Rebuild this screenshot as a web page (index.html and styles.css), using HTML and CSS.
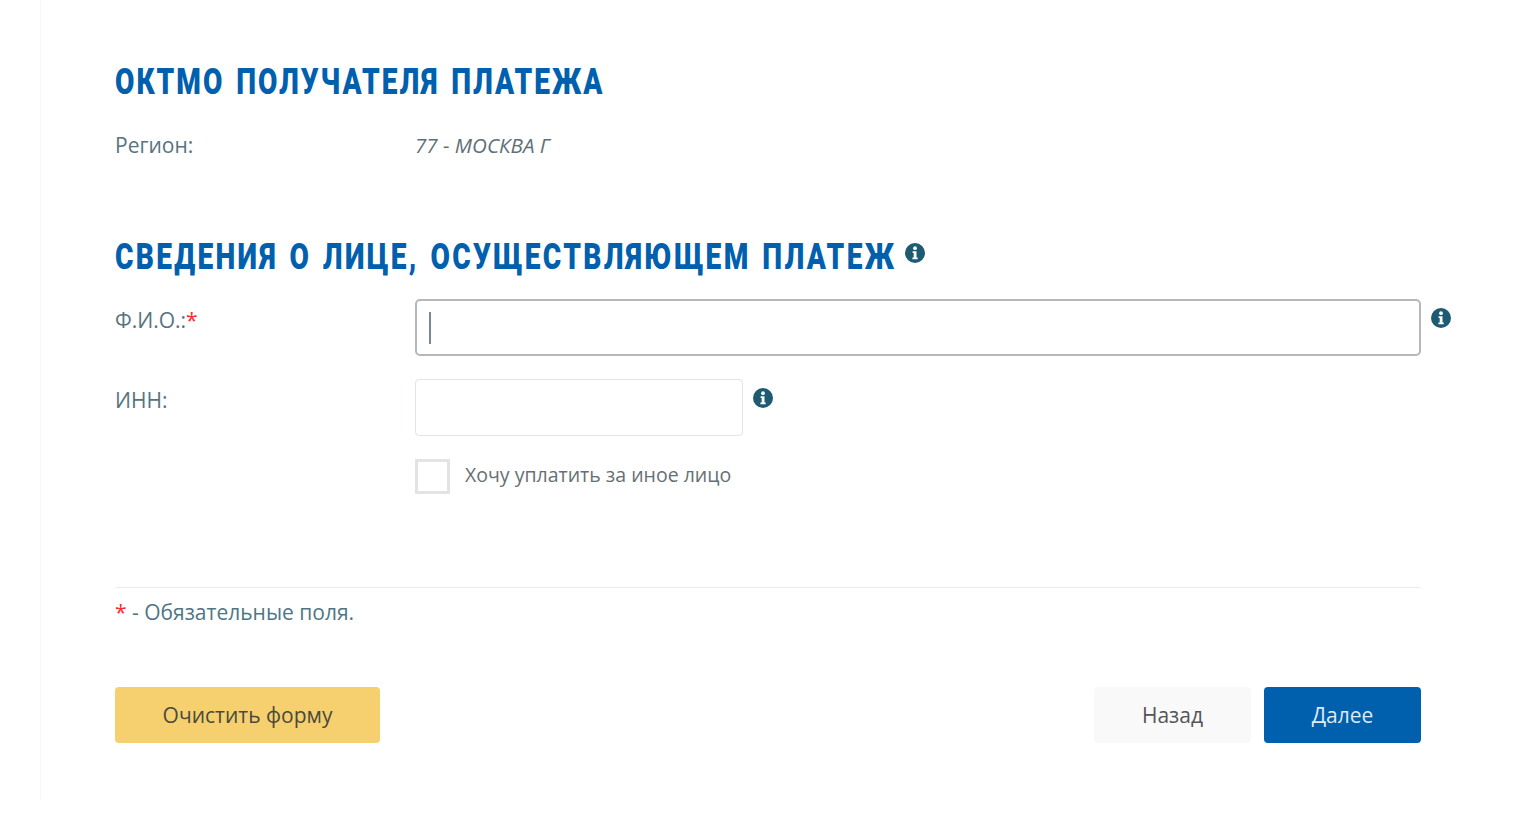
FILE: index.html
```html
<!DOCTYPE html>
<html lang="ru">
<head>
    <meta charset="UTF-8">
    <title>Сведения о плательщике</title>
    <link rel="stylesheet" href="styles.css">
</head>
<body>
    <div class="page">
        <form class="payment-form">
            <h2 class="section-title"><span class="title-text">ОКТМО получателя платежа</span></h2>
            <div class="region-row">
                <div class="label">Регион:</div>
                <div class="region-value">77 - МОСКВА Г</div>
            </div>

            <h2 class="section-title payer-title">
                <span class="title-text">Сведения о лице, осуществляющем платеж</span>
                <svg class="info info-title" viewBox="0 0 20 20"><circle cx="10" cy="10" r="10"/><circle class="info-mark" cx="10" cy="5.2" r="1.9"/><path class="info-mark" d="M7.6 8.2h3.9v6.2h1.2v1.9H7.4v-1.9h1.3v-4.3H7.6z"/></svg>
            </h2>

            <div class="field-row">
                <label class="label" for="fio">Ф.И.О.:<span class="req">*</span></label>
                <div class="text-input focused" id="fio"><span class="caret"></span></div>
                <svg class="info" viewBox="0 0 20 20"><circle cx="10" cy="10" r="10"/><circle class="info-mark" cx="10" cy="5.2" r="1.9"/><path class="info-mark" d="M7.6 8.2h3.9v6.2h1.2v1.9H7.4v-1.9h1.3v-4.3H7.6z"/></svg>
            </div>

            <div class="field-row inn-row">
                <label class="label" for="inn">ИНН:</label>
                <div class="text-input short" id="inn"></div>
                <svg class="info" viewBox="0 0 20 20"><circle cx="10" cy="10" r="10"/><circle class="info-mark" cx="10" cy="5.2" r="1.9"/><path class="info-mark" d="M7.6 8.2h3.9v6.2h1.2v1.9H7.4v-1.9h1.3v-4.3H7.6z"/></svg>
            </div>

            <div class="check-row">
                <span class="checkbox"></span>
                <span class="check-text">Хочу уплатить за иное лицо</span>
            </div>

            <div class="required-note"><span class="req">*</span> - Обязательные поля.</div>

            <div class="buttons">
                <button type="button" class="btn btn-clear">Очистить форму</button>
                <div class="buttons-right">
                    <button type="button" class="btn btn-back">Назад</button>
                    <button type="button" class="btn btn-next">Далее</button>
                </div>
            </div>
        </form>
    </div>
</body>
</html>
```

FILE: styles.css
```css
body {
    margin: 0;
    background-color: #fff;
    font-family: "Open Sans", "Noto Sans", sans-serif;
    font-size: 21px;
    color: #567480;
}

.page {
    height: 800px;
    margin-left: 40px;
    border-left: 1px solid #f7f7f7;
    box-sizing: border-box;
    padding: 63px 0 0 74px;
}

.payment-form {
    width: 1306px;
}

.section-title {
    margin: 0;
    font-family: "Roboto", sans-serif;
    font-size: 36px;
    line-height: 38px;
    font-weight: 900;
    letter-spacing: 2.6px;
    word-spacing: 3.5px;
    text-transform: uppercase;
    white-space: nowrap;
    color: #0060ae;
}

/* шрифта DIN нет, поэтому сжимаем Roboto */
.title-text {
    display: inline-block;
    transform: scaleX(0.78);
    transform-origin: left center;
}

.payer-title {
    position: relative;
    margin-top: 79px;
    letter-spacing: 3px;
    word-spacing: 3px;
}

.region-row {
    display: flex;
    margin-top: 31px;
    line-height: 27px;
}

.label {
    width: 300px;
    flex-shrink: 0;
}

.region-value {
    font-size: 20.6px;
    font-style: italic;
    color: #5f6f77;
}

.req {
    color: #ff2a2a;
}

.field-row {
    display: flex;
    margin-top: 23px;
    line-height: 42px;
}

.inn-row {
    margin-top: 23px;
}

.text-input {
    box-sizing: border-box;
    flex: 1;
    height: 57px;
    display: flex;
    align-items: center;
    padding-left: 12px;
    background: #fff;
    border: 1px solid #dfe5e8;
    border-radius: 4px;
}

.text-input.focused {
    border: 2px solid #b4b8ba;
    border-radius: 5px;
}

.text-input.short {
    flex: none;
    width: 328px;
}

.caret {
    width: 2px;
    height: 32px;
    background-color: #7a8a92;
}

.info {
    width: 20px;
    height: 20px;
    margin: 9px -30px 0 10px;
    flex-shrink: 0;
    fill: #1f5a73;
}

.info-mark {
    fill: #fff;
}

.info-title {
    position: absolute;
    top: 5px;
    left: 790px;
    margin: 0;
}

.check-row {
    display: flex;
    align-items: center;
    gap: 15px;
    margin: 23px 0 0 300px;
}

.checkbox {
    box-sizing: border-box;
    width: 35px;
    height: 35px;
    border: 3px solid #e3e3e3;
}

.check-text {
    margin-bottom: 4px;
    font-size: 19.5px;
    color: #667074;
}

.required-note {
    margin-top: 93px;
    padding-top: 11px;
    border-top: 1px solid #ececec;
    line-height: 27px;
    color: #4f7585;
}

.buttons {
    display: flex;
    justify-content: space-between;
    margin-top: 61px;
}

.buttons-right {
    display: flex;
    gap: 13px;
}

.btn {
    height: 56px;
    border: none;
    border-radius: 4px;
    font-family: "Open Sans", "Noto Sans", sans-serif;
    font-size: 21px;
    cursor: pointer;
}

.btn-clear {
    width: 265px;
    background-color: #f6d06f;
    color: #4a4a3c;
}

.btn-back {
    width: 157px;
    background-color: #f9f9f9;
    color: #555;
}

.btn-next {
    width: 157px;
    background-color: #0060ae;
    color: #dfeaf3;
}
```
